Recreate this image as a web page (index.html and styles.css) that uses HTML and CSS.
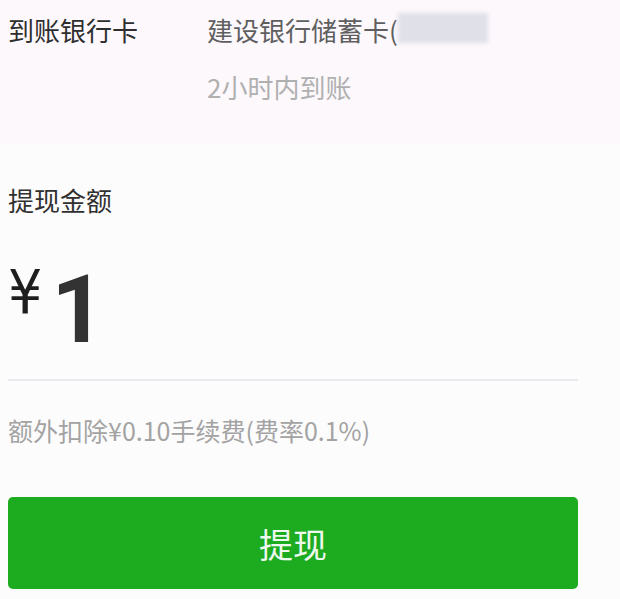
FILE: index.html
```html
<!DOCTYPE html>
<html lang="zh-CN">
<head>
    <meta charset="UTF-8">
    <meta name="viewport" content="width=device-width, initial-scale=1.0">
    <title>提现</title>
    <link rel="stylesheet" href="styles.css">
</head>
<body>
    <div class="bank-section">
        <div class="bank-row">
            <div class="bank-label">到账银行卡</div>
            <div class="bank-info">
                <div class="bank-name">建设银行储蓄卡(<span class="bank-mask"></span></div>
                <div class="bank-time">2小时内到账</div>
            </div>
        </div>
    </div>

    <div class="amount-section">
        <div class="amount-title">提现金额</div>
        <div class="amount-row">
            <span class="currency">¥</span>
            <span class="amount-value">1</span>
        </div>
        <div class="divider"></div>
        <div class="fee-note">额外扣除¥0.10手续费(费率0.1%)</div>
        <button class="withdraw-btn">提现</button>
    </div>
</body>
</html>
```

FILE: styles.css
```css
body {
    margin: 0;
    font-family: "Noto Sans CJK SC", "Noto Sans", sans-serif;
    background: #fdfcfd;
    color: #333;
}

.bank-section {
    background: #fcf8fc;
    height: 144px;
    box-sizing: border-box;
    padding: 13px 8px 0;
}

.bank-row {
    display: flex;
}

.bank-label {
    width: 199px;
    font-size: 26px;
    line-height: 34px;
    color: #2e2e2e;
}

.bank-name {
    font-size: 26px;
    line-height: 34px;
    color: #5f5f5f;
    display: flex;
    align-items: center;
}

.bank-mask {
    display: inline-block;
    width: 90px;
    height: 30px;
    background: #dfe0e8;
    filter: blur(2px);
    margin-top: -4px;
}

.bank-time {
    margin-top: 23px;
    font-size: 26px;
    line-height: 34px;
    color: #b0b0b0;
}

.amount-section {
    padding: 39px 42px 0 8px;
}

.amount-title {
    font-size: 26px;
    line-height: 34px;
    color: #303030;
}

.amount-row {
    display: flex;
    align-items: flex-start;
    margin-top: 46px;
    height: 116px;
}

.currency {
    font-family: "DejaVu Sans", sans-serif;
    font-stretch: condensed;
    font-size: 60px;
    line-height: 59px;
    color: #1e1e1e;
}

.amount-value {
    font-family: Roboto, sans-serif;
    font-weight: bold;
    font-size: 94px;
    line-height: 94px;
    color: #333;
    margin-left: 9px;
}

.divider {
    height: 2px;
    background: #ebe9ee;
}

.fee-note {
    margin-top: 32px;
    font-size: 25px;
    line-height: 34px;
    color: #a3a3a3;
}

.withdraw-btn {
    display: block;
    width: 100%;
    height: 92px;
    margin-top: 50px;
    border: none;
    border-radius: 5px;
    background: #1dab20;
    color: #eef8ee;
    font-family: "Noto Sans CJK SC", sans-serif;
    font-size: 34px;
}
```
